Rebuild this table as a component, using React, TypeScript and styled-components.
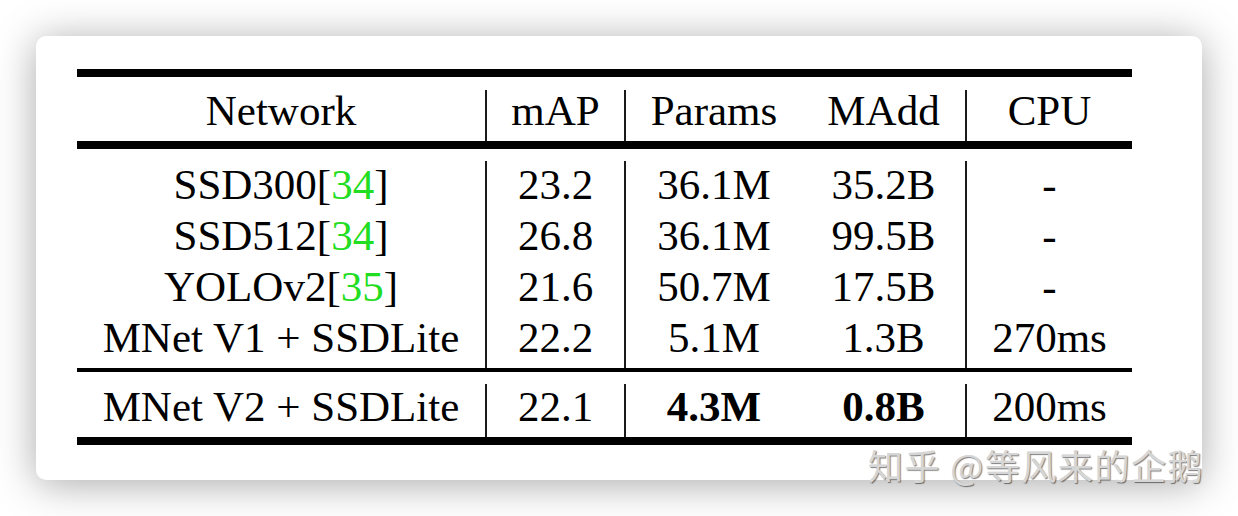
import * as React from "react";
import styled, { createGlobalStyle } from "styled-components";

const GlobalStyle = createGlobalStyle`
  html, body {
    margin: 0;
    padding: 0;
    background: #ffffff;
  }
`;

const Page = styled.div`
  position: relative;
  width: 1238px;
  height: 516px;
  padding: 36px;
  box-sizing: border-box;
  overflow: hidden;
`;

const Card = styled.div`
  width: 1166px;
  height: 444px;
  box-sizing: border-box;
  padding: 33px 70px 0 41px;
  background: #ffffff;
  border-radius: 10px;
  box-shadow: 0 4px 40px rgba(0, 0, 0, 0.34);
  font-family: "Liberation Serif", "Times New Roman", serif;
  font-size: 43px;
  color: #000;
`;

const Table = styled.div`
  width: 1055px;
`;

const Rule = styled.div<{ $thick: number }>`
  height: ${(p) => p.$thick}px;
  background: #000;
`;

const Section = styled.div<{ $padTop: number }>`
  display: grid;
  grid-template-columns: 408px 139px 178px 163px 167px;
  padding-top: ${(p) => p.$padTop}px;
`;

const Column = styled.div<{ $sep?: boolean; $lh: number; $padBottom: number; $shift?: number }>`
  display: flex;
  flex-direction: column;
  align-items: center;
  border-left: ${(p) => (p.$sep ? "2px solid #1a1a1a" : "none")};
  line-height: ${(p) => p.$lh}px;
  padding-bottom: ${(p) => p.$padBottom}px;
  white-space: nowrap;

  & > span:first-child {
    margin-top: ${(p) => p.$shift ?? 0}px;
  }
`;

const Cite = styled.span`
  color: #22dd22;
`;

const Bold = styled.span`
  font-weight: 700;
`;

const Watermark = styled.div`
  position: absolute;
  left: 868px;
  top: 447px;
  font-family: "Noto Sans CJK SC", "Noto Sans", sans-serif;
  font-size: 35px;
  letter-spacing: 1.5px;
  line-height: 1;
  color: #d6d6d6;
  text-shadow: 1px 1px 1px rgba(0, 0, 0, 0.5);
  white-space: nowrap;
`;

const seps = [false, true, true, false, true];

const header = ["Network", "mAP", "Params", "MAdd", "CPU"];

const body: React.ReactNode[][] = [
  [
    <>SSD300[<Cite>34</Cite>]</>,
    <>SSD512[<Cite>34</Cite>]</>,
    <>YOLOv2[<Cite>35</Cite>]</>,
    "MNet V1 + SSDLite",
  ],
  ["23.2", "26.8", "21.6", "22.2"],
  ["36.1M", "36.1M", "50.7M", "5.1M"],
  ["35.2B", "99.5B", "17.5B", "1.3B"],
  ["-", "-", "-", "270ms"],
];

const last: React.ReactNode[] = [
  "MNet V2 + SSDLite",
  "22.1",
  <Bold>4.3M</Bold>,
  <Bold>0.8B</Bold>,
  "200ms",
];

export default function App() {
  return (
    <>
      <GlobalStyle />
      <Page>
        <Card>
          <Table>
            <Rule $thick={8} />
            <Section $padTop={13}>
              {header.map((h, i) => (
                <Column key={i} $sep={seps[i]} $lh={41} $padBottom={10}>
                  <span>{h}</span>
                </Column>
              ))}
            </Section>
            <Rule $thick={8} />
            <Section $padTop={12}>
              {body.map((col, i) => (
                <Column key={i} $sep={seps[i]} $lh={51} $padBottom={5} $shift={-2}>
                  {col.map((cell, j) => (
                    <span key={j}>{cell}</span>
                  ))}
                </Column>
              ))}
            </Section>
            <Rule $thick={4} />
            <Section $padTop={12}>
              {last.map((cell, i) => (
                <Column key={i} $sep={seps[i]} $lh={45} $padBottom={8}>
                  <span>{cell}</span>
                </Column>
              ))}
            </Section>
            <Rule $thick={8} />
          </Table>
        </Card>
        <Watermark>知乎 @等风来的企鹅</Watermark>
      </Page>
    </>
  );
}
